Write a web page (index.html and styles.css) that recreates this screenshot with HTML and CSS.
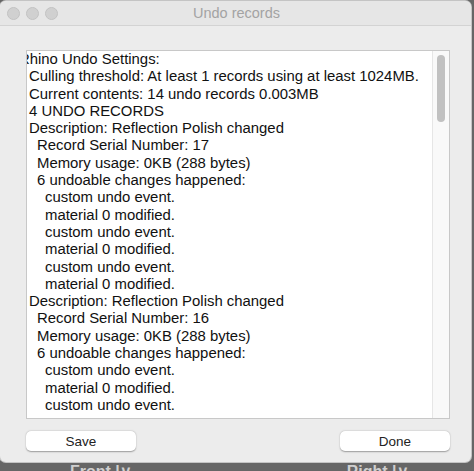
FILE: index.html
```html
<!DOCTYPE html>
<html>
<head>
<meta charset="utf-8">
<link rel="stylesheet" href="styles.css">
</head>
<body>
<div class="window">
  <div class="titlebar">
    <div class="lights"><span class="light"></span><span class="light"></span><span class="light"></span></div>
    <div class="title">Undo records</div>
  </div>
  <div class="content">
    <div class="textbox">
      <div class="lines">
        <div class="l0">Rhino Undo Settings:</div>
        <div class="l1">Culling threshold: At least 1 records using at least 1024MB.</div>
        <div class="l1">Current contents: 14 undo records 0.003MB</div>
        <div class="l1">4 UNDO RECORDS</div>
        <div class="l1">Description: Reflection Polish changed</div>
        <div class="l2">Record Serial Number: 17</div>
        <div class="l2">Memory usage: 0KB (288 bytes)</div>
        <div class="l2">6 undoable changes happened:</div>
        <div class="l3">custom undo event.</div>
        <div class="l3">material 0 modified.</div>
        <div class="l3">custom undo event.</div>
        <div class="l3">material 0 modified.</div>
        <div class="l3">custom undo event.</div>
        <div class="l3">material 0 modified.</div>
        <div class="l1">Description: Reflection Polish changed</div>
        <div class="l2">Record Serial Number: 16</div>
        <div class="l2">Memory usage: 0KB (288 bytes)</div>
        <div class="l2">6 undoable changes happened:</div>
        <div class="l3">custom undo event.</div>
        <div class="l3">material 0 modified.</div>
        <div class="l3">custom undo event.</div>
      </div>
      <div class="scroll"><div class="thumb"></div></div>
    </div>
    <div class="buttons">
      <button class="btn">Save</button>
      <button class="btn">Done</button>
    </div>
  </div>
</div>
<div class="desk">
  <span class="vp vp-front">Front |∨</span>
  <span class="vp vp-right">Right |∨</span>
</div>
</body>
</html>
```

FILE: styles.css
```css
html, body {
  margin: 0;
  padding: 0;
}
body {
  width: 474px;
  height: 471px;
  overflow: hidden;
  background: #666666;
  font-family: "Liberation Sans", Arial, sans-serif;
}
.window {
  width: 471px;
  height: 461px;
  margin-top: 1px;
  background: #ececec;
  border-radius: 6px;
  box-shadow: 0 0 0 1px #c4c4c4;
  overflow: hidden;
  display: flex;
  flex-direction: column;
}
.titlebar {
  height: 24px;
  background: #e6e6e6;
  border-bottom: 1px solid #d3d3d3;
  display: flex;
  align-items: center;
  position: relative;
}
.lights {
  display: flex;
  gap: 6px;
  padding-left: 7px;
}
.light {
  width: 11px;
  height: 11px;
  border-radius: 50%;
  background: #d0d0d0;
  border: 0.5px solid #c2c2c2;
}
.title {
  position: absolute;
  left: 0;
  right: 0;
  text-align: center;
  color: #a3a3a3;
  font-size: 14.5px;
  margin-left: 2px;
}
.content {
  padding: 24px 21px 0 26px;
  display: flex;
  flex-direction: column;
}
.textbox {
  height: 367px;
  border: 1px solid #c8c8c8;
  background: #ffffff;
  display: flex;
}
.lines {
  flex: 1;
  overflow: hidden;
  font-size: 14.9px;
  line-height: 17.3px;
  color: #111;
  white-space: nowrap;
}
.l0 { margin-left: -8px; }
.l1 { margin-left: 2px; }
.l2 { margin-left: 10px; }
.l3 { margin-left: 18px; }
.scroll {
  width: 16px;
  border-left: 1px solid #e6e6e6;
  background: #f9f9f9;
  display: flex;
  justify-content: center;
  padding-top: 4px;
}
.thumb {
  width: 8px;
  height: 67px;
  border-radius: 4px;
  background: #c1c1c1;
}
.buttons {
  display: flex;
  justify-content: space-between;
  margin-top: 12px;
}
.btn {
  width: 110px;
  height: 20px;
  background: #ffffff;
  border: none;
  border-radius: 5px;
  box-shadow: 0 0.5px 1.5px rgba(0,0,0,0.35);
  font-family: "Liberation Sans", Arial, sans-serif;
  font-size: 13.5px;
  color: #222;
  padding: 0;
}
.desk {
  height: 10px;
  display: flex;
}
.vp {
  color: #cfcfcf;
  font-size: 16px;
  font-weight: bold;
  line-height: 16px;
  margin-top: 2px;
}
.vp-front { margin-left: 70px; }
.vp-right { margin-left: 215px; }
```
